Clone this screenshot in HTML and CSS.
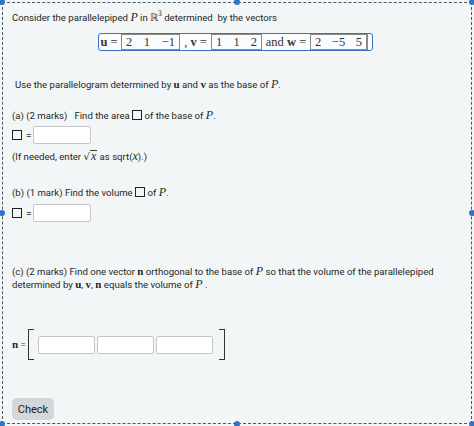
FILE: index.html
```html
<!DOCTYPE html>
<html>
<head>
<meta charset="utf-8">
<link rel="stylesheet" href="styles.css">
</head>
<body>
<div class="frame">
  <span class="handle h-tl"></span><span class="handle h-tm"></span><span class="handle h-tr"></span>
  <span class="handle h-ml"></span><span class="handle h-mr"></span>
  <span class="handle h-bl"></span><span class="handle h-bm"></span><span class="handle h-br"></span>

  <p class="line intro">Consider the parallelepiped <i class="m">P</i> in <span class="bb">ℝ</span><sup class="sup">3</sup> determined&nbsp; by the vectors</p>

  <div class="vecrow-wrap">
    <div class="vecrow">
      <span class="lbl l1"><b>u</b>&nbsp;=</span>
      <span class="vbox w1"><span>2</span><span>1</span><span>−1</span></span>
      <span class="lbl l2">,&nbsp;<b>v</b>&nbsp;=</span>
      <span class="vbox w2"><span>1</span><span>1</span><span>2</span></span>
      <span class="lbl l3">and&nbsp;<b>w</b>&nbsp;=</span>
      <span class="vbox w3"><span>2</span><span>−5</span><span>5</span></span>
      <span class="tail"></span>
    </div>
  </div>

  <p class="line use">Use the parallelogram determined by <b class="mb">u</b> and <b class="mb">v</b> as the base of <i class="m">P</i>.</p>

  <p class="line qa">(a) (2 marks)&nbsp;&nbsp; Find the area <span class="sq"></span> of the base of <i class="m">P</i>.</p>
  <div class="ans ans-a"><span class="sq"></span><span class="eq">=</span><span class="inp"></span></div>
  <p class="line hint">(If needed, enter <span class="sqrt"><span class="rad">√</span><i class="m over">x</i></span> as sqrt(<i class="m">x</i>).)</p>

  <p class="line qb">(b) (1 mark) Find the volume <span class="sq"></span> of <i class="m">P</i>.</p>
  <div class="ans ans-b"><span class="sq"></span><span class="eq">=</span><span class="inp"></span></div>

  <p class="qc">(c) (2 marks) Find one vector <b class="mb">n</b> orthogonal to the base of <i class="m">P</i> so that the volume of the parallelepiped<br>determined by <b class="mb">u</b>, <b class="mb">v</b>, <b class="mb">n</b> equals the volume of <i class="m">P</i> .</p>

  <div class="nrow">
    <span class="nlbl"><b class="mb">n</b> =</span>
    <span class="br br-l"></span>
    <span class="inp ni"></span><span class="inp ni"></span><span class="inp ni"></span>
    <span class="br br-r"></span>
  </div>

  <button class="check">Check</button>
</div>
</body>
</html>
```
FILE: styles.css
```css
html, body {
  margin: 0;
  padding: 0;
  background: #f2f6f7;
}
body {
  font-family: Roboto, "Liberation Sans", Arial, sans-serif;
  font-size: 9.6px;
  color: #262626;
}
.frame {
  position: relative;
  margin: 2px;
  height: 422px;
  box-sizing: border-box;
  border: 1px dashed #4b5563;
  padding: 7px 9px 0 9px;
}
.handle {
  position: absolute;
  width: 6px;
  height: 6px;
  border-radius: 50%;
  background: #3572c6;
}
.h-tl { left: -4px; top: -4px; }
.h-tm { left: 231px; top: -4px; }
.h-tr { right: -4px; top: -4px; }
.h-ml { left: -4px; top: 207px; }
.h-mr { right: -4px; top: 207px; }
.h-bl { left: -4px; bottom: -4px; }
.h-bm { left: 231px; bottom: -4px; }
.h-br { right: -4px; bottom: -4px; }

.line {
  margin: 0;
  height: 16px;
  line-height: 16px;
  white-space: nowrap;
}
.m {
  font-family: "Liberation Serif", "Times New Roman", serif;
  font-style: italic;
  font-size: 12px;
  line-height: 0;
}
.mb {
  font-family: "Liberation Serif", "Times New Roman", serif;
  font-weight: bold;
  font-size: 11px;
  line-height: 0;
}
.bb {
  font-family: "DejaVu Sans", sans-serif;
  font-size: 10px;
  line-height: 0;
}
.sup {
  font-family: "Liberation Serif", serif;
  font-size: 7.5px;
  vertical-align: 5px;
  line-height: 0;
}

.vecrow-wrap {
  display: flex;
  margin-top: 7px;
  padding-left: 86px;
}
.vecrow {
  display: flex;
  align-items: stretch;
  height: 18px;
  box-sizing: border-box;
  border: 1.5px solid #3a6fc4;
  border-radius: 3px;
  font-family: "Liberation Serif", "Times New Roman", serif;
  font-size: 12.5px;
  color: #333;
  background: #fbfcfd;
}
.vecrow b { font-weight: bold; }
.lbl {
  display: flex;
  align-items: center;
  justify-content: center;
  box-sizing: border-box;
  white-space: nowrap;
}
.l1 { width: 22px; padding-right: 2px; }
.l2 { width: 31px; }
.l3 { width: 48px; }
.vbox {
  display: flex;
  align-items: center;
  justify-content: space-between;
  box-sizing: border-box;
  border: 1px solid #8a8a8a;
  padding: 0 4px;
}
.w1 { width: 59px; }
.w2 { width: 51px; }
.w3 { width: 57px; }
.tail {
  width: 4px;
  border-left: 1px solid #8a8a8a;
}

.use { margin-top: 26px; padding-left: 3px; }
.qa { margin-top: 15px; }
.sq {
  display: inline-block;
  width: 8px;
  height: 8px;
  border: 1.6px solid #222;
  vertical-align: -1px;
}
.ans {
  display: flex;
  align-items: center;
  height: 18px;
  margin-top: 2px;
}
.ans .sq { margin-right: 4px; }
.eq { color: #555; margin-right: 1px; font-size: 10px; }
.inp {
  display: inline-block;
  box-sizing: border-box;
  width: 58px;
  height: 18px;
  background: #fff;
  border: 1px solid #c3c7ca;
  border-radius: 2px;
}
.hint { margin-top: 5px; }
.sqrt { white-space: nowrap; }
.rad { font-family: "DejaVu Sans", sans-serif; font-size: 10px; }
.over { border-top: 1px solid #333; padding: 0 1px; line-height: 10px; display: inline-block; }
.qb { margin-top: 20px; }
.ans-b { margin-top: 3px; }

.qc {
  margin: 43px 0 0 0;
  height: 26px;
  line-height: 13px;
  white-space: nowrap;
}

.nrow {
  display: flex;
  align-items: center;
  margin-top: 38px;
  height: 31px;
}
.nlbl { margin-right: 2px; color: #444; white-space: nowrap; }
.nlbl .mb { color: #222; }
.br {
  display: inline-block;
  box-sizing: border-box;
  width: 6px;
  height: 31px;
  border: 1.5px solid #333;
}
.br-l { border-right: none; margin-right: 4px; }
.br-r { border-left: none; margin-left: 4px; }
.ni { width: 57px; margin-right: 2px; }
.ni:last-of-type { margin-right: 0; }

.check {
  display: block;
  margin-top: 38px;
  width: 42px;
  height: 22px;
  padding: 0;
  border: none;
  border-radius: 5px;
  background: #d3d7da;
  color: #222;
  font-family: Roboto, "Liberation Sans", Arial, sans-serif;
  font-size: 11px;
}
```
